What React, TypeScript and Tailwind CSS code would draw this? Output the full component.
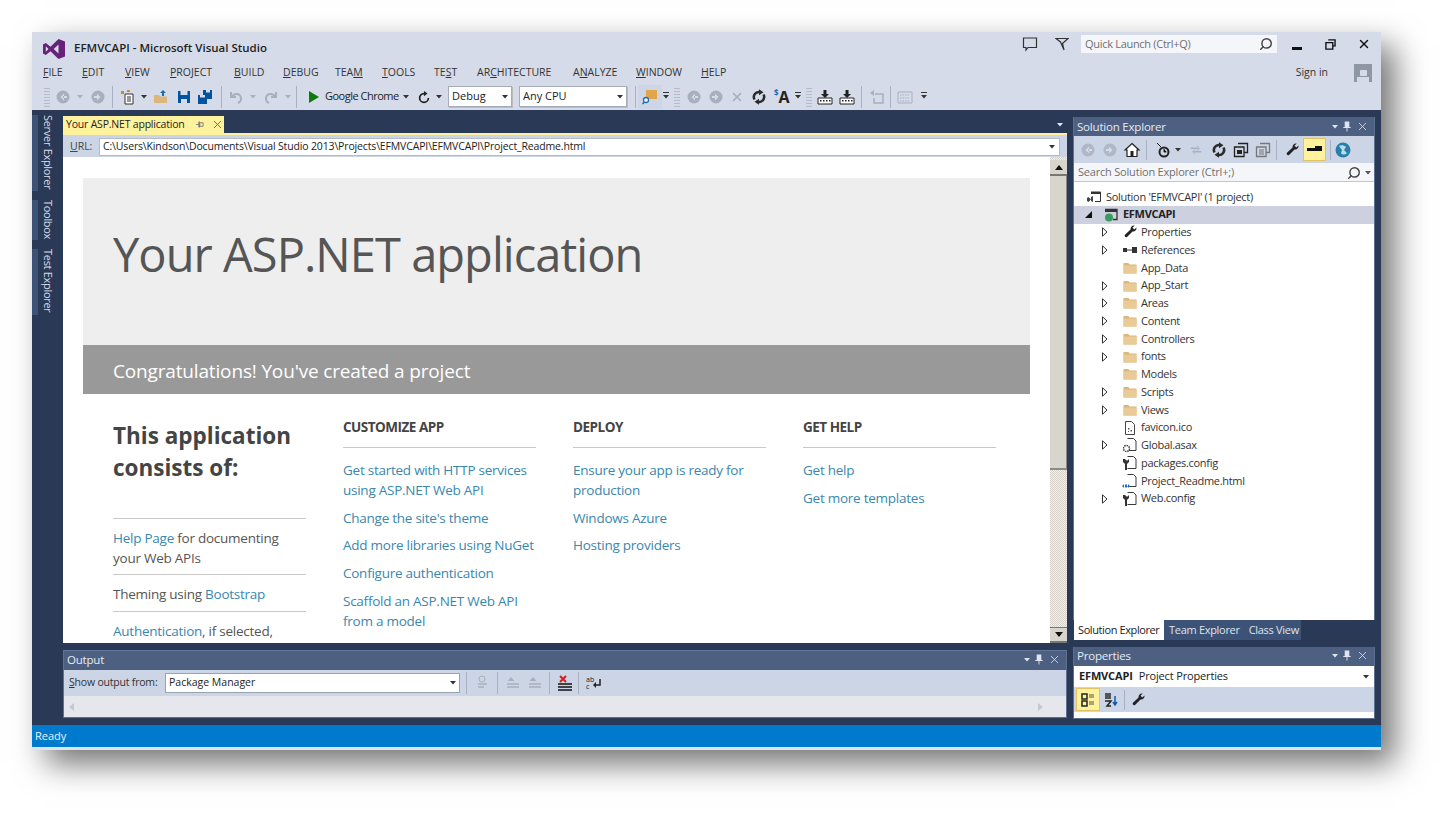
import { Search, X } from 'lucide-react';
import type { ReactNode } from 'react';

const grey = '#a9afbb';

function Ico({ children, className = 'w-4 h-4' }: { children: ReactNode; className?: string }) {
  return (
    <svg viewBox="0 0 16 16" className={`${className} shrink-0`}>
      {children}
    </svg>
  );
}

function Arrow({ color = '#333' }: { color?: string }) {
  return (
    <svg viewBox="0 0 6 4" className="w-[6px] h-[4px] shrink-0">
      <path d="M0 0h6L3 3.5z" fill={color} />
    </svg>
  );
}

function Grip() {
  return <div className="w-[6px] h-[20px] shrink-0 bg-[repeating-linear-gradient(0deg,#a8aebd_0_1px,transparent_1px_3px)] opacity-70" />;
}

function Sep({ h = 'h-[22px]' }: { h?: string }) {
  return <div className={`w-px ${h} bg-[#a8b0c2] shrink-0`} />;
}

function Overflow() {
  return (
    <svg viewBox="0 0 6 8" className="w-[6px] h-[8px] shrink-0 self-end mb-[3px]">
      <path d="M0 1h6v1H0zM0 4h6L3 7.5z" fill="#333" />
    </svg>
  );
}

function NavCircle({ dir, color = grey }: { dir: 'l' | 'r'; color?: string }) {
  return (
    <Ico>
      <circle cx="8" cy="8" r="6.5" fill={color} />
      <path d={dir === 'l' ? 'M9 4.5 5.5 8 9 11.5zM8 7h4v2H8z' : 'M7 4.5 10.5 8 7 11.5zM4 7h4v2H4z'} fill="#d6dbe9" />
    </Ico>
  );
}

function Refresh({ color = '#2a2a2a' }: { color?: string }) {
  return (
    <Ico>
      <path d="M3.500 10.500A5 5 0 0 1 9 3.200M12.500 5.500A5 5 0 0 1 7 12.800" fill="none" stroke={color} strokeWidth="2.500" />
      <path d="M8 .3 12.500 3.300 8 6.300zM8 15.700 3.500 12.700 8 9.700z" fill={color} />
    </Ico>
  );
}

function Folder() {
  return (
    <Ico>
      <path d="M1.500 3h5l1 1.500h7v9h-13z" fill="#dcb67a" />
      <path d="M1.500 5.500h13v8h-13z" fill="#e8cb97" />
    </Ico>
  );
}

function PageIcon({ badge }: { badge?: ReactNode }) {
  return (
    <Ico>
      <path d="M5.500 1.500h6l2.500 2.500v9.500H5.500" fill="none" stroke="#3a3a3a" strokeWidth="1" />
      {badge}
    </Ico>
  );
}

function Wrench({ color = '#222' }: { color?: string }) {
  return (
    <Ico>
      <path d="M14.500 3.500c.4 2.300-1.500 4.400-4 4L5 13c-1 1-3.200-.8-2-2.200L8.600 5.500C8.200 3 10.300 1 12.700 1.500L10.500 3.700l1.800 1.800z" fill={color} />
    </Ico>
  );
}

function VsLogo() {
  return (
    <svg viewBox="0 0 22 20" className="w-[22px] h-[20px] shrink-0 mt-[3px]">
      <path d="M15.500 0 22 2.600v14.800L15.500 20 7.500 12.300 2.800 16 0 14.600V5.400L2.800 4l4.700 3.700zM15.500 5.600 10.700 10l4.800 4.400zM2.800 7.300v5.400L5.500 10z" fill="#68217a" />
    </svg>
  );
}

const menus = [
  ['w-[39px]', '', 'F', 'ILE'],
  ['w-[43px]', '', 'E', 'DIT'],
  ['w-[45px]', '', 'V', 'IEW'],
  ['w-[64px]', '', 'P', 'ROJECT'],
  ['w-[49px]', '', 'B', 'UILD'],
  ['w-[52px]', '', 'D', 'EBUG'],
  ['w-[47px]', 'TEA', 'M', ''],
  ['w-[52px]', '', 'T', 'OOLS'],
  ['w-[43px]', 'TE', 'S', 'T'],
  ['w-[96px]', 'AR', 'C', 'HITECTURE'],
  ['w-[63px]', 'A', 'N', 'ALYZE'],
  ['w-[65px]', '', 'W', 'INDOW'],
  ['w-[40px]', '', 'H', 'ELP'],
];

const tree: { name: string; exp?: boolean; icon: ReactNode }[] = [
  {
    name: 'Properties',
    exp: true,
    icon: <Wrench />,
  },
  {
    name: 'References',
    exp: true,
    icon: (
      <Ico>
        <path d="M1 6h4v4H1zM10 5h5v6h-5zM5 7.500h5v1H5z" fill="#333" />
      </Ico>
    ),
  },
  { name: 'App_Data', icon: <Folder /> },
  { name: 'App_Start', exp: true, icon: <Folder /> },
  { name: 'Areas', exp: true, icon: <Folder /> },
  { name: 'Content', exp: true, icon: <Folder /> },
  { name: 'Controllers', exp: true, icon: <Folder /> },
  { name: 'fonts', exp: true, icon: <Folder /> },
  { name: 'Models', icon: <Folder /> },
  { name: 'Scripts', exp: true, icon: <Folder /> },
  { name: 'Views', exp: true, icon: <Folder /> },
  {
    name: 'favicon.ico',
    icon: (
      <Ico>
        <path d="M3.500 1.500h6l3 3v10h-9z" fill="#fff" stroke="#444" />
        <path d="M6 8h1.500v1.500H6zM8.500 10h1.500v1.500H8.500zM6 11h1v1H6z" fill="#555" />
      </Ico>
    ),
  },
  {
    name: 'Global.asax',
    exp: true,
    icon: <PageIcon badge={<circle cx="4.500" cy="11.500" r="3" fill="#fff" stroke="#444" strokeWidth="1.500" strokeDasharray="1.500 .8" />} />,
  },
  {
    name: 'packages.config',
    icon: <PageIcon badge={<path d="M1 4v3l2 2v6h2V9l2-2V4L5.500 5.500h-1L3 4z" fill="#333" />} />,
  },
  {
    name: 'Project_Readme.html',
    icon: <PageIcon badge={<path d="M0 13l2-2v4zM8 13l-2-2v4zM3 11.500h2v3H3z" fill="#1f6fc0" />} />,
  },
  {
    name: 'Web.config',
    exp: true,
    icon: <PageIcon badge={<path d="M1 4v3l2 2v6h2V9l2-2V4L5.500 5.500h-1L3 4z" fill="#333" />} />,
  },
];

function Link({ children }: { children: ReactNode }) {
  return <span className="text-[#3a87ad]">{children}</span>;
}

function DocColumn({ title, links }: { title: string; links: string[][] }) {
  return (
    <div className="w-[193px] shrink-0 mt-px">
      <div className="h-[28px] flex items-center text-[13.500px] font-bold text-[#444] tracking-[-0.5px]">{title}</div>
      <div className="border-t border-[#c8c8c8] mt-[6px] pt-[12px] flex flex-col gap-[7.700px]">
        {links.map((l) => (
          <div key={l[0]} className="text-[13.500px] leading-[20px] tracking-[-0.25px] text-[#3a87ad]">
            {l.map((s) => (
              <div key={s} className="whitespace-nowrap">
                {s}
              </div>
            ))}
          </div>
        ))}
      </div>
    </div>
  );
}

function ToolWinHeader({ title, up }: { title: string; up?: boolean }) {
  return (
    <div className={`h-[19px] bg-[#4d6082] flex items-center px-[3px] shrink-0 text-[#e6eaf2] text-[11.500px] tracking-[-0.2px] ${up ? 'pb-[2px]' : ''}`}>
      <span>{title}</span>
      <div className="ml-auto flex items-center gap-[5px] pr-[2px]">
        <Arrow color="#dfe4ee" />
        <svg viewBox="0 0 8 12" className="w-[8px] h-[11px]">
          <path d="M1.500 .5h5v6h1.500v1H4.500V11.500h-1V7.500H0v-1h1.500z" fill="#dfe4ee" fillRule="evenodd" />
        </svg>
        <X className="w-[13px] h-[13px] text-[#dfe4ee]" strokeWidth={1.500} />
      </div>
    </div>
  );
}

export default function App() {
  return (
    <div className="w-[1446px] h-[816px] overflow-hidden bg-white pt-8 pl-8 font-['Open_Sans',sans-serif]">
      <div className="w-[1349px] h-[718px] flex flex-col bg-[#d6dbe9] shadow-[14px_14px_30px_rgba(0,0,0,0.55)] text-[#222]">
        {/* TITLE */}
        <div className="h-[30px] flex items-center pl-[11px] shrink-0">
          <VsLogo />
          <span className="ml-[9px] mt-[2px] text-[11.500px] font-semibold text-[#1e1e1e]">EFMVCAPI - Microsoft Visual Studio</span>
          <div className="ml-auto flex items-center mb-[6px]">
            <svg viewBox="0 0 16 16" className="w-4 h-4">
              <path d="M1.500 2h13v9.500H6L4 14v-2.500H1.500z" fill="none" stroke="#333" strokeWidth="1.200" />
            </svg>
            <svg viewBox="0 0 14 14" className="w-[14px] h-[14px] ml-[17px]">
              <path d="M1 1.500h12L7.500 6.500 9 13 5.500 5z" fill="none" stroke="#333" strokeWidth="1.200" />
            </svg>
            <div className="w-[196px] h-[18px] ml-[12px] bg-[#f5f6fa] flex items-center justify-between px-[4px] text-[11px] text-[#707070] tracking-[-0.3px]">
              Quick Launch (Ctrl+Q)
              <Search className="w-[14px] h-[14px] text-[#444] -scale-x-100" strokeWidth={2.500} />
            </div>
            <div className="w-[10px] h-[3px] bg-[#111] ml-[15px] mt-[8px]" />
            <svg viewBox="0 0 12 12" className="w-[11px] h-[11px] ml-[23px]">
              <path d="M3.500 1h7.500v6.500H8.500M1 4h7.500v7H1z" fill="none" stroke="#111" strokeWidth="1.500" />
            </svg>
            <X className="w-[14px] h-[14px] text-[#111] ml-[21px] mr-[10px]" strokeWidth={2.500} />
          </div>
        </div>

        {/* MENU */}
        <div className="h-[21px] flex items-center pl-[11px] text-[10.500px] text-[#333] shrink-0">
          {menus.map(([w, a, u, b]) => (
            <div key={a + u + b} className={`${w} shrink-0`}>
              {a}
              <span className="underline">{u}</span>
              {b}
            </div>
          ))}
          <span className="ml-auto text-[10.500px]">Sign in</span>
          <div className="w-[18px] h-[18px] ml-[26px] mr-[9px] bg-[#8f97a5] flex flex-col items-center justify-end">
            <div className="w-[7px] h-[6px] bg-[#d6dbe9] mb-px rounded-[1px]" />
            <div className="w-[12px] h-[5px] bg-[#d6dbe9]" />
          </div>
        </div>

        {/* TOOLBAR */}
        <div className="h-[27px] flex items-center shrink-0 pl-[12px] text-[11px]">
          <Grip />
          <div className="ml-[5px]"><NavCircle dir="l" /></div>
          <div className="ml-[6px]"><Arrow color={grey} /></div>
          <div className="ml-[7px]"><NavCircle dir="r" /></div>
          <div className="ml-[6px]"><Sep /></div>
          <div className="ml-[6px]">
            <Ico>
              <path d="M6 5h8v10H6z" fill="#fff" stroke="#333" />
              <path d="M2 2h3v3H2zM8 1h3v2H8z" fill="#c98a2b" />
              <path d="M8 8h4M8 10h4M8 12h4" stroke="#333" />
            </Ico>
          </div>
          <div className="ml-[6px]"><Arrow /></div>
          <div className="ml-[6px]">
            <Ico>
              <path d="M1 6h5l1 1.500h7V14H1z" fill="#dcb67a" />
              <path d="M7 4l3-3 3 3h-2v3H9V4z" fill="#1b6cb5" />
            </Ico>
          </div>
          <div className="ml-[7px]">
            <Ico>
              <path d="M2 2h12v12H2z" fill="#00539c" />
              <path d="M4.500 2h7v4h-7zM5 10h6v4H5z" fill="#d6dbe9" />
            </Ico>
          </div>
          <div className="ml-[5px]">
            <Ico>
              <path d="M1 6h9v9H1z" fill="#00539c" />
              <path d="M6 1h9v9h-5V6H6z" fill="#00539c" />
              <path d="M3 6h5v2.500H3zM9 1h4v2.500H9z" fill="#d6dbe9" />
            </Ico>
          </div>
          <div className="ml-[8px]"><Sep /></div>
          <div className="ml-[6px]">
            <Ico>
              <path d="M3 3v5h5M4 8c1.500-4 8-4.500 9 1 .3 2-.8 4-3 5" fill="none" stroke={grey} strokeWidth="2" />
            </Ico>
          </div>
          <div className="ml-[6px]"><Arrow color={grey} /></div>
          <div className="ml-[7px]">
            <Ico>
              <path d="M13 3v5H8M12 8C10.500 4 4 3.500 3 9c-.3 2 .8 4 3 5" fill="none" stroke={grey} strokeWidth="2" />
            </Ico>
          </div>
          <div className="ml-[6px]"><Arrow color={grey} /></div>
          <div className="ml-[5px]"><Sep /></div>
          <svg viewBox="0 0 10 12" className="w-[10px] h-[12px] ml-[12px]">
            <path d="M0 0l10 6-10 6z" fill="#0e7a0d" />
          </svg>
          <span className="ml-[6px] w-[74px] whitespace-nowrap tracking-[-0.5px]">Google Chrome</span>
          <div className="ml-[4px]"><Arrow /></div>
          <div className="ml-[8px]">
            <svg viewBox="0 0 16 16" className="w-[14px] h-[14px]">
              <path d="M8 1l4 3-4 3V5a4 4 0 1 0 4 4h2a6 6 0 1 1-6-6z" fill="#222" />
            </svg>
          </div>
          <div className="ml-[5px]"><Arrow /></div>
          <div className="ml-[6px] w-[64px] h-[21px] bg-white border border-[#a5acba] flex items-center justify-between px-[3px] shadow-[1px_1px_0_#bbb]">
            Debug
            <Arrow />
          </div>
          <div className="ml-[7px] w-[108px] h-[21px] bg-white border border-[#a5acba] flex items-center justify-between px-[3px] shadow-[1px_1px_0_#bbb]">
            Any CPU
            <Arrow />
          </div>
          <div className="ml-[8px]"><Sep /></div>
          <div className="ml-[2px] w-[24px] h-[24px] bg-[#cdd5e6] flex items-center justify-center">
            <Ico>
              <path d="M4 1h11v9H4z" fill="#e3a54c" />
              <circle cx="4" cy="11" r="2.500" fill="#fff" stroke="#1b6cb5" strokeWidth="1.300" />
              <path d="M2.500 13 .5 15" stroke="#1b6cb5" strokeWidth="1.500" />
            </Ico>
          </div>
          <div className="ml-[1px]"><Overflow /></div>
          <div className="ml-[5px]"><Grip /></div>
          <div className="ml-[6px]"><NavCircle dir="l" /></div>
          <div className="ml-[6px]"><NavCircle dir="r" /></div>
          <div className="ml-[6px]">
            <X className="w-[14px] h-[14px] text-[#a9afbb]" strokeWidth={3} />
          </div>
          <div className="ml-[7px]"><Refresh /></div>
          <span className="ml-[7px] text-[16px] font-bold leading-none text-[#222]">
            <span className="text-[8px] text-[#1b6cb5] align-top">$</span>A
          </span>
          <div className="ml-[5px]"><Overflow /></div>
          <div className="ml-[5px]"><Grip /></div>
          {[0, 1].map((i) => (
            <div key={i} className={i ? 'ml-[6px]' : 'ml-[5px]'}>
              <Ico>
                <path d="M1 9h14v6H1z" fill="#fff" stroke="#222" />
                <path d="M6.500 1h3v4h2.500L8 9 4 5h2.500z" fill="#222" />
                <path d="M3 11h1.500v1.500H3zM6 11h1.500v1.500H6zM9 11h1.500v1.500H9zM12 11h1.500v1.500H12z" fill="#222" />
              </Ico>
            </div>
          ))}
          <div className="ml-[6px]"><Sep /></div>
          <div className="ml-[7px]">
            <Ico>
              <path d="M6 5h8v9H5V9" fill="none" stroke={grey} strokeWidth="1.500" />
              <path d="M1 4l4-3v6z" fill={grey} />
            </Ico>
          </div>
          <div className="ml-[5px]"><Sep /></div>
          <div className="ml-[6px]">
            <Ico>
              <path d="M1 3h14v11H1z" fill="none" stroke={grey} />
              <path d="M3 6h10M3 9h10M3 12h10" stroke={grey} strokeDasharray="1.500 1" />
            </Ico>
          </div>
          <div className="ml-[8px]"><Overflow /></div>
        </div>

        {/* MAIN */}
        <div className="flex-1 min-h-0 bg-[#2a3a56] flex text-[#222]">
          {/* left rail */}
          <div className="w-[31px] shrink-0 pt-[5px] flex flex-col gap-[9px]">
            {[
              ['Server Explorer', 'h-[76px]'],
              ['Toolbox', 'h-[40px]'],
              ['Test Explorer', 'h-[66px]'],
            ].map(([t, h]) => (
              <div key={t} className={`${h} flex`}>
                <div className="w-[6px] h-full bg-[#3d5277]" />
                <div className="ml-[2px] pl-[1px] text-[11px] text-[#d4dae7] leading-[15px] [writing-mode:vertical-rl] whitespace-nowrap tracking-[-0.3px]">{t}</div>
              </div>
            ))}
          </div>

          {/* center */}
          <div className="w-[1004px] shrink-0 flex flex-col pt-[6px] pb-[7px] gap-[7px]">
            <div className="flex-1 min-h-0 flex flex-col">
              <div className="h-[17px] flex shrink-0 relative">
                <div className="w-[161px] bg-[#fff29d] flex items-center pl-[3px] text-[10.500px] text-[#1e1e1e] tracking-[-0.2px]">
                  Your ASP.NET application
                  <svg viewBox="0 0 10 8" className="w-[9px] h-[7px] ml-[11px]">
                    <path d="M0 4h3M3 1h1v6H3zM4 2h4v4H4z" fill="none" stroke="#777" />
                  </svg>
                  <X className="w-[13px] h-[13px] ml-[6px] text-[#555]" strokeWidth={1.500} />
                </div>
                <div className="ml-auto mr-[4px] self-center">
                  <Arrow color="#dfe4ee" />
                </div>
              </div>
              <div className="h-[2px] bg-[#fff29d] shrink-0" />
              <div className="h-[22px] bg-[#ccd5e5] flex items-center shrink-0 pl-[7px] pr-[7px] pt-px text-[10.500px] gap-[7px]">
                <span className="w-[22px] text-[#444]">
                  <span className="underline">U</span>RL:
                </span>
                <div className="flex-1 h-[18px] bg-white border border-[#b5bbc8] flex items-center pl-[3px] pr-[4px] tracking-[-0.15px] text-[#222]">
                  C:\Users\Kindson\Documents\Visual Studio 2013\Projects\EFMVCAPI\EFMVCAPI\Project_Readme.html
                  <div className="ml-auto">
                    <Arrow />
                  </div>
                </div>
              </div>
              <div className="flex-1 min-h-0 flex bg-white">
                <div className="flex-1 min-w-0 overflow-hidden pt-[21px] pl-[20px] pr-[20px]">
                  <div className="h-[167px] bg-[#eeeeee] pl-[30px] pt-[43px]">
                    <div className="text-[47px] font-normal text-[#555] leading-[66px] tracking-[-0.95px] whitespace-nowrap">Your ASP.NET application</div>
                  </div>
                  <div className="h-[49px] bg-[#999999] pl-[30px] pt-[4px] flex items-center text-[19px] text-white tracking-[-0.16px]">
                    Congratulations! You&apos;ve created a project
                  </div>
                  <div className="flex pl-[30px] pt-[18px] gap-[37px]">
                    <div className="w-[193px] shrink-0">
                      <div className="text-[22.500px] font-bold text-[#444] leading-[31.500px] mt-[8px]">
                        This application
                        <br />
                        consists of:
                      </div>
                      <div className="mt-[35px] border-t border-[#c8c8c8] pt-[9px] text-[13.500px] leading-[20px] tracking-[-0.25px] text-[#555]">
                        <Link>Help Page</Link> for documenting
                        <br />
                        your Web APIs
                      </div>
                      <div className="mt-[6px] border-t border-[#c8c8c8] pt-[9px] text-[13.500px] leading-[20px] tracking-[-0.25px] text-[#555]">
                        Theming using <Link>Bootstrap</Link>
                      </div>
                      <div className="mt-[7px] border-t border-[#c8c8c8] pt-[9px] text-[13.500px] leading-[20px] tracking-[-0.25px] text-[#555]">
                        <Link>Authentication</Link>, if selected,
                      </div>
                    </div>
                    <DocColumn
                      title="CUSTOMIZE APP"
                      links={[
                        ['Get started with HTTP services', 'using ASP.NET Web API'],
                        ["Change the site's theme"],
                        ['Add more libraries using NuGet'],
                        ['Configure authentication'],
                        ['Scaffold an ASP.NET Web API', 'from a model'],
                      ]}
                    />
                    <DocColumn
                      title="DEPLOY"
                      links={[['Ensure your app is ready for', 'production'], ['Windows Azure'], ['Hosting providers']]}
                    />
                    <DocColumn title="GET HELP" links={[['Get help'], ['Get more templates']]} />
                  </div>
                </div>
                {/* scrollbar */}
                <div className="w-[17px] shrink-0 flex flex-col pt-[3px] bg-[repeating-conic-gradient(#d4d0c8_0_25%,#f3f2ee_0_50%)] bg-[length:2px_2px]">
                  <div className="h-[16px] bg-[#d8d5cd] border-b-2 border-[#777] flex items-center justify-center">
                    <svg viewBox="0 0 8 5" className="w-[8px] h-[5px]"><path d="M4 0l4 5H0z" fill="#111" /></svg>
                  </div>
                  <div className="h-[294px] bg-[#d8d5cd] border-r border-b-2 border-[#8a8a8a]" />
                  <div className="mt-auto h-[16px] bg-[#d8d5cd] border-t border-[#777] border-b-2 flex items-center justify-center">
                    <svg viewBox="0 0 8 5" className="w-[8px] h-[5px]"><path d="M4 5l4-5H0z" fill="#111" /></svg>
                  </div>
                </div>
              </div>
            </div>

            {/* output */}
            <div className="h-[68px] shrink-0 flex flex-col border border-[#5d7091] border-t-[#62759a]">
              <ToolWinHeader title="Output" up />
              <div className="h-[26px] bg-[#ccd5e5] flex items-center pl-[5px] text-[10.500px] shrink-0">
                <span className="w-[96px] text-[#333] tracking-[-0.2px]">
                  <span className="underline">S</span>how output from:
                </span>
                <div className="w-[295px] h-[20px] bg-white border border-[#9aa1b0] flex items-center justify-between px-[3px]">
                  Package Manager
                  <Arrow />
                </div>
                <div className="ml-[6px]"><Sep /></div>
                <Ico className="w-4 h-4 ml-[8px]">
                  <path d="M3 9h9M3 12h6" stroke={grey} strokeWidth="1.500" />
                  <circle cx="7" cy="4" r="3" fill="none" stroke={grey} />
                </Ico>
                <div className="ml-[6px]"><Sep /></div>
                <Ico className="w-4 h-4 ml-[7px]">
                  <path d="M2 9h12M2 12h12" stroke={grey} strokeWidth="1.500" />
                  <path d="M6 2 2.500 6h7z" fill={grey} />
                </Ico>
                <Ico className="w-4 h-4 ml-[6px]">
                  <path d="M2 9h12M2 12h12" stroke={grey} strokeWidth="1.500" />
                  <path d="M6 2 2.500 6h7z" fill={grey} />
                </Ico>
                <div className="ml-[6px]"><Sep /></div>
                <Ico className="w-4 h-4 ml-[7px]">
                  <path d="M1 9h14M1 12h14M1 15h14" stroke="#111" strokeWidth="1.500" />
                  <path d="M3 1l6 6M9 1 3 7" stroke="#d02020" strokeWidth="2" />
                </Ico>
                <div className="ml-[5px]"><Sep /></div>
                <Ico className="w-4 h-4 ml-[7px]">
                  <path d="M14 4v6H9" fill="none" stroke="#222" strokeWidth="1.500" />
                  <path d="M10 7v6l-3-3z" fill="#222" />
                  <text x="0" y="7" fontSize="7" fill="#222">ab</text>
                  <text x="0" y="14" fontSize="7" fill="#222">c</text>
                </Ico>
              </div>
              <div className="flex-1 bg-[#e6e7ed] flex items-center justify-between px-[5px]">
                <svg viewBox="0 0 5 8" className="w-[5px] h-[8px]"><path d="M5 0v8L0 4z" fill="#c5c8d2" /></svg>
                <svg viewBox="0 0 5 8" className="w-[5px] h-[8px] mr-[18px]"><path d="M0 0v8l5-4z" fill="#c5c8d2" /></svg>
              </div>
            </div>
          </div>

          {/* right */}
          <div className="w-[302px] ml-[6px] shrink-0 flex flex-col pt-[7px] pb-[6px]">
            <div className="flex-1 min-h-0 flex flex-col">
              <div className="flex-1 min-h-0 flex flex-col border-x border-[#5d7091]">
                <ToolWinHeader title="Solution Explorer" />
                <div className="h-[27px] bg-[#ccd5e5] flex items-center pl-[6px] shrink-0">
                  <NavCircle dir="l" color="#b0b7c6" />
                  <div className="ml-[6px]"><NavCircle dir="r" color="#b0b7c6" /></div>
                  <div className="ml-[6px]">
                    <Ico>
                      <path d="M8 1.500 15 8h-2v6.500H3V8H1z" fill="#fff" stroke="#222" strokeWidth="1.200" />
                      <path d="M6.500 9h3v5.500h-3z" fill="#222" />
                    </Ico>
                  </div>
                  <div className="ml-[6px]"><Sep h="h-[20px]" /></div>
                  <div className="ml-[8px]">
                    <Ico>
                      <circle cx="9" cy="10" r="4.500" fill="none" stroke="#222" strokeWidth="2" />
                      <path d="M9 7v3h2.500M2 1l4 4" stroke="#222" />
                    </Ico>
                  </div>
                  <div className="ml-[4px]"><Arrow /></div>
                  <div className="ml-[8px]">
                    <Ico className="w-[14px] h-[14px]">
                      <path d="M2 6h9M14 10H5" stroke={grey} strokeWidth="1.500" />
                      <path d="M9 3l3 3-3 3M7 7l-3 3 3 3" fill="none" stroke={grey} />
                    </Ico>
                  </div>
                  <div className="ml-[8px]"><Refresh /></div>
                  <div className="ml-[6px]">
                    <Ico>
                      <path d="M5 1.500h9.500v9h-3M1.500 5h9.500v9.500H1.500z" fill="none" stroke="#222" strokeWidth="1.300" />
                      <path d="M4 8h5v4H4z" fill="#222" />
                    </Ico>
                  </div>
                  <div className="ml-[6px]">
                    <Ico>
                      <path d="M5 1.500h9.500v9h-3M1.500 5h9.500v9.500H1.500z" fill="none" stroke="#777" strokeWidth="1.300" />
                      <path d="M4 8h5M4 10h5M4 12h5" stroke="#777" />
                    </Ico>
                  </div>
                  <div className="ml-[5px]"><Sep h="h-[20px]" /></div>
                  <div className="ml-[7px]"><Wrench /></div>
                  <div className="ml-[3px] w-[23px] h-[23px] bg-[#fff29d] border border-[#e5c365] flex items-center justify-center">
                    <div className="w-[15px] h-[3px] bg-[#111] relative">
                      <div className="absolute right-0 -top-[2px] w-[7px] h-[2px] bg-[#111]" />
                    </div>
                  </div>
                  <div className="ml-[4px]"><Sep h="h-[20px]" /></div>
                  <svg viewBox="0 0 16 16" className="w-4 h-4 ml-[4px]">
                    <circle cx="8" cy="8" r="7.500" fill="#2a7fa8" />
                    <path d="M4 4c2-1 5-1 7 1l-2 3 3 3c-2 2-5 2-6 0l1-3z" fill="#b9dcec" />
                  </svg>
                </div>
                <div className="h-[19px] bg-[#f5f6fa] flex items-center shrink-0 pl-[4px] pr-[3px] pt-px text-[11px] text-[#707070] tracking-[-0.2px] border-b border-[#c0c6d3]">
                  Search Solution Explorer (Ctrl+;)
                  <Search className="ml-auto w-[14px] h-[14px] text-[#444] -scale-x-100" strokeWidth={2.500} />
                  <div className="ml-[4px]"><Arrow color="#555" /></div>
                </div>
                <div className="flex-1 min-h-0 bg-white pt-[6px] text-[11px] text-[#333] tracking-[-0.3px]">
                  <div className="h-[17.750px] flex items-center pl-[12px]">
                    <Ico>
                      <path d="M5 3h9.500v9.500H9" fill="none" stroke="#333" />
                      <path d="M5 3h9.500v2H5z" fill="#333" />
                      <path d="M1 9l1.500-1 2.500 2.500V8l2-1v6l-2-1v-1.500L2.500 13 1 12z" fill="#444" />
                    </Ico>
                    <span className="ml-[4px]">Solution &apos;EFMVCAPI&apos; (1 project)</span>
                  </div>
                  <div className="h-[17.750px] flex items-center bg-[#ccd0df] pl-[11px] font-bold text-[#222]">
                    <svg viewBox="0 0 7 7" className="w-[7px] h-[7px]"><path d="M7 0v7H0z" fill="#111" /></svg>
                    <Ico className="w-4 h-4 ml-[11px]">
                      <path d="M2 2.500h12v10H10" fill="none" stroke="#333" strokeWidth="1.300" />
                      <path d="M2 2.500h12V5H2z" fill="#333" />
                      <circle cx="6" cy="10.500" r="4" fill="#3c9a5f" />
                    </Ico>
                    <span className="ml-[4px]">EFMVCAPI</span>
                  </div>
                  {tree.map((t) => (
                    <div key={t.name} className="h-[17.750px] flex items-center pl-[28px]">
                      <div className="w-[20px] shrink-0">
                        {t.exp && (
                          <svg viewBox="0 0 6 10" className="w-[6px] h-[10px]">
                            <path d="M.5.8 5 5 .5 9.200z" fill="#fff" stroke="#333" />
                          </svg>
                        )}
                      </div>
                      {t.icon}
                      <span className="ml-[3px] whitespace-nowrap">{t.name}</span>
                    </div>
                  ))}
                </div>
              </div>
              <div className="h-[20px] flex shrink-0 text-[11px] pl-px">
                <div className="w-[90px] bg-white flex items-center pl-[4px] text-[#222] whitespace-nowrap tracking-[-0.4px]">Solution Explorer</div>
                <div className="w-[137px] bg-[#3d5277] flex items-center pl-[5px] text-[#dfe4ee] whitespace-nowrap gap-[9px] tracking-[-0.3px]">
                  <span>Team Explorer</span>
                  <span>Class View</span>
                </div>
              </div>
            </div>
            <div className="h-[72px] mt-[7px] shrink-0 flex flex-col border-x border-b border-[#5d7091]">
              <ToolWinHeader title="Properties" up />
              <div className="h-[21px] bg-white flex items-center px-[5px] text-[11px] shrink-0 text-[#222] tracking-[-0.15px]">
                <span className="font-bold">EFMVCAPI</span>
                <span className="ml-[6px]">Project Properties</span>
                <div className="ml-auto"><Arrow /></div>
              </div>
              <div className="h-[25px] bg-[#ccd5e5] flex items-center shrink-0 pl-[2px]">
                <div className="w-[24px] h-[23px] bg-[#fff29d] border border-[#e5c365] flex items-center justify-center">
                  <Ico>
                    <path d="M2 2h5v5H2zM2 9h5v5H2z" fill="none" stroke="#222" strokeWidth="1.500" />
                    <path d="M9 3h5M9 5h5M9 10h5M9 12h5" stroke="#555" />
                  </Ico>
                </div>
                <Ico className="w-4 h-4 ml-[3px]">
                  <path d="M2 1h6v6H2z" fill="#555" />
                  <path d="M2 9h6L4 14h4" fill="none" stroke="#222" strokeWidth="1.500" />
                  <path d="M12 4v9M10 10l2 3 2-3" fill="none" stroke="#0b5cad" strokeWidth="1.500" />
                </Ico>
                <div className="ml-[5px]"><Sep h="h-[20px]" /></div>
                <div className="ml-[5px]"><Wrench /></div>
              </div>
              <div className="flex-1 bg-white" />
            </div>
          </div>
        </div>

        {/* STATUS */}
        <div className="h-[22px] bg-[#007acc] shrink-0 flex items-center pl-[3px] pt-px text-[11px] text-white/90">Ready</div>
        <div className="h-[3px] bg-[#dfe3ea] shrink-0" />
      </div>
    </div>
  );
}
